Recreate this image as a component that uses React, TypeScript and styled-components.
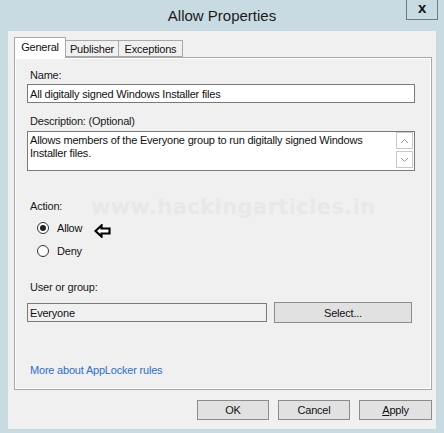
import React from "react";
import styled, { createGlobalStyle } from "styled-components";

const Global = createGlobalStyle`
  html, body { margin: 0; padding: 0; }
  body { font-family: "Liberation Sans", Arial, sans-serif; font-size: 11px; letter-spacing: -0.2px; color: #000; }
`;

const Window = styled.div`
  width: 444px;
  height: 433px;
  background: #c9dbe2;
  display: flex;
  flex-direction: column;
  box-sizing: border-box;
  overflow: hidden;
`;

const TitleBar = styled.div`
  position: relative;
  height: 31px;
  display: flex;
  align-items: center;
  justify-content: center;
`;

const Title = styled.div`
  font-size: 15px;
  letter-spacing: 0;
  color: #1a1a1a;
  margin-top: -1px;
`;

const CloseBtn = styled.div`
  position: absolute;
  left: 406px;
  top: -1px;
  width: 32px;
  height: 21px;
  border: 1px solid #6b7b82;
  border-top: none;
  display: flex;
  align-items: center;
  justify-content: center;
  font-weight: bold;
  font-size: 15px;
  line-height: 1;
  color: #111;
  box-sizing: border-box;
  padding-bottom: 3px;
`;

const Client = styled.div`
  margin: 0 8px;
  width: 428px;
  height: 398px;
  background: #f0f0f0;
  box-sizing: border-box;
  padding: 6px 5px 0 6px;
  display: flex;
  flex-direction: column;
`;

const TabRow = styled.div`
  display: flex;
  align-items: flex-end;
  height: 20px;
  position: relative;
  z-index: 1;
`;

const Tab = styled.div<{ $active?: boolean; $w: number }>`
  width: ${(p) => p.$w}px;
  height: ${(p) => (p.$active ? 21 : 17)}px;
  margin-bottom: ${(p) => (p.$active ? -1 : 0)}px;
  box-sizing: border-box;
  border: 1px solid #a9a9a9;
  border-bottom: ${(p) => (p.$active ? "none" : "1px solid #a9a9a9")};
  ${(p) => (p.$active ? "" : "border-left: none;")}
  background: ${(p) => (p.$active ? "#ffffff" : "#f0f0f0")};
  display: flex;
  align-items: ${(p) => (p.$active ? "flex-start" : "center")};
  padding-top: ${(p) => (p.$active ? 3 : 0)}px;
  justify-content: center;
  color: #111;
`;

const Panel = styled.div`
  position: relative;
  width: 418px;
  height: 333px;
  box-sizing: border-box;
  border: 1px solid #a9a9a9;
  box-shadow: inset 0 0 0 1px #ffffff;
  background: #f0f0f0;
  padding: 0 16px 0 12px;
  display: flex;
  flex-direction: column;
`;

const Label = styled.div<{ $mt: number }>`
  position: relative;
  margin-top: ${(p) => p.$mt}px;
  margin-left: 3px;
  line-height: 15px;
  height: 15px;
  color: #1a1a1a;
`;

const TextBox = styled.div<{ $w?: number; $bg?: string }>`
  position: relative;
  width: ${(p) => (p.$w ? `${p.$w}px` : "100%")};
  height: 19px;
  box-sizing: border-box;
  border: 1px solid #7a7a7a;
  background: ${(p) => p.$bg || "#ffffff"};
  padding: 0 2px;
  display: flex;
  align-items: center;
  color: #111;
  white-space: nowrap;
`;

const TextArea = styled.div`
  position: relative;
  height: 40px;
  box-sizing: border-box;
  border: 1px solid #7a7a7a;
  background: #fff;
  display: flex;
`;

const AreaText = styled.div`
  flex: 1;
  padding: 2px 2px;
  line-height: 13px;
  color: #111;
`;

const ScrollBar = styled.div`
  width: 17px;
  margin: 0 1px 0 0;
  display: flex;
  flex-direction: column;
`;

const ScrollBtn = styled.div`
  height: 17px;
  box-sizing: border-box;
  border: 1px solid #c8c8c8;
  display: flex;
  align-items: center;
  justify-content: center;
  & + & { margin-top: 2px; }
`;

const RadioRow = styled.div<{ $mt: number }>`
  position: relative;
  margin-top: ${(p) => p.$mt}px;
  margin-left: 10px;
  display: flex;
  align-items: center;
  height: 15px;
  gap: 8px;
  color: #111;
`;

const RadioCircle = styled.div<{ $checked?: boolean }>`
  width: 12px;
  height: 12px;
  border-radius: 50%;
  box-sizing: border-box;
  border: 1px solid #333;
  background: #fff;
  display: flex;
  align-items: center;
  justify-content: center;
  &::after {
    content: "";
    display: ${(p) => (p.$checked ? "block" : "none")};
    width: 6px;
    height: 6px;
    border-radius: 50%;
    background: #222;
  }
`;

const Pointer = styled.svg`
  margin-left: 4px;
  margin-top: 7px;
`;

const Row = styled.div<{ $mt: number }>`
  position: relative;
  margin-top: ${(p) => p.$mt}px;
  display: flex;
  align-items: flex-start;
  gap: 7px;
`;

const Button = styled.div<{ $w: number; $h?: number }>`
  width: ${(p) => p.$w}px;
  height: ${(p) => p.$h || 20}px;
  box-sizing: border-box;
  border: 1px solid #8c8c8c;
  background: #e1e1e1;
  display: flex;
  align-items: center;
  justify-content: center;
  color: #111;
`;

const Link = styled.div<{ $mt: number }>`
  margin-top: ${(p) => p.$mt}px;
  margin-left: 3px;
  line-height: 15px;
  color: #2d6fd0;
`;

const Watermark = styled.div`
  position: absolute;
  left: 76px;
  top: 137px;
  font-family: "DejaVu Sans", sans-serif;
  font-weight: bold;
  font-size: 21px;
  letter-spacing: 0.4px;
  color: #e8e8e8;
  pointer-events: none;
  white-space: nowrap;
`;

const ButtonBar = styled.div`
  margin-top: 10px;
  display: flex;
  justify-content: flex-end;
  gap: 9px;
  width: 418px;
`;

const Underline = styled.span`
  text-decoration: underline;
`;

export default function App() {
  return (
    <>
      <Global />
      <Window>
        <TitleBar>
          <Title>Allow Properties</Title>
          <CloseBtn>x</CloseBtn>
        </TitleBar>
        <Client>
          <TabRow>
            <Tab $active $w={52}>General</Tab>
            <Tab $w={53}>Publisher</Tab>
            <Tab $w={64}>Exceptions</Tab>
          </TabRow>
          <Panel>
            <Watermark>www.hackingarticles.in</Watermark>
            <Label $mt={10}>Name:</Label>
            <TextBox style={{ marginTop: 1 }}>All digitally signed Windows Installer files</TextBox>
            <Label $mt={11}>Description: (Optional)</Label>
            <TextArea style={{ marginTop: 2 }}>
              <AreaText>
                Allows members of the Everyone group to run digitally signed Windows Installer files.
              </AreaText>
              <ScrollBar>
                <ScrollBtn>
                  <svg width="9" height="6" viewBox="0 0 9 6">
                    <path d="M1 5 L4.5 1.5 L8 5" fill="none" stroke="#9a9a9a" strokeWidth="1" />
                  </svg>
                </ScrollBtn>
                <ScrollBtn>
                  <svg width="9" height="6" viewBox="0 0 9 6">
                    <path d="M1 1 L4.5 4.5 L8 1" fill="none" stroke="#9a9a9a" strokeWidth="1" />
                  </svg>
                </ScrollBtn>
              </ScrollBar>
            </TextArea>
            <Label $mt={28}>Action:</Label>
            <RadioRow $mt={6}>
              <RadioCircle $checked />
              <span>Allow</span>
              <Pointer width="17" height="14" viewBox="0 0 17 14">
                <path
                  d="M1.5 7 L7.5 1.5 L7.5 4.5 L15.5 4.5 L15.5 9.5 L7.5 9.5 L7.5 12.5 Z"
                  fill="#fff"
                  stroke="#000"
                  strokeWidth="2.2"
                  strokeLinejoin="miter"
                />
              </Pointer>
            </RadioRow>
            <RadioRow $mt={8}>
              <RadioCircle />
              <span>Deny</span>
            </RadioRow>
            <Label $mt={22}>User or group:</Label>
            <Row $mt={8}>
              <TextBox $w={240} $bg="#f0f0f0">Everyone</TextBox>
              <Button $w={138} $h={21} style={{ marginTop: -1 }}>Select...</Button>
            </Row>
            <Link $mt={40}>More about AppLocker rules</Link>
          </Panel>
          <ButtonBar>
            <Button $w={72}>OK</Button>
            <Button $w={72}>Cancel</Button>
            <Button $w={73}>
              <span><Underline>A</Underline>pply</span>
            </Button>
          </ButtonBar>
        </Client>
      </Window>
    </>
  );
}
